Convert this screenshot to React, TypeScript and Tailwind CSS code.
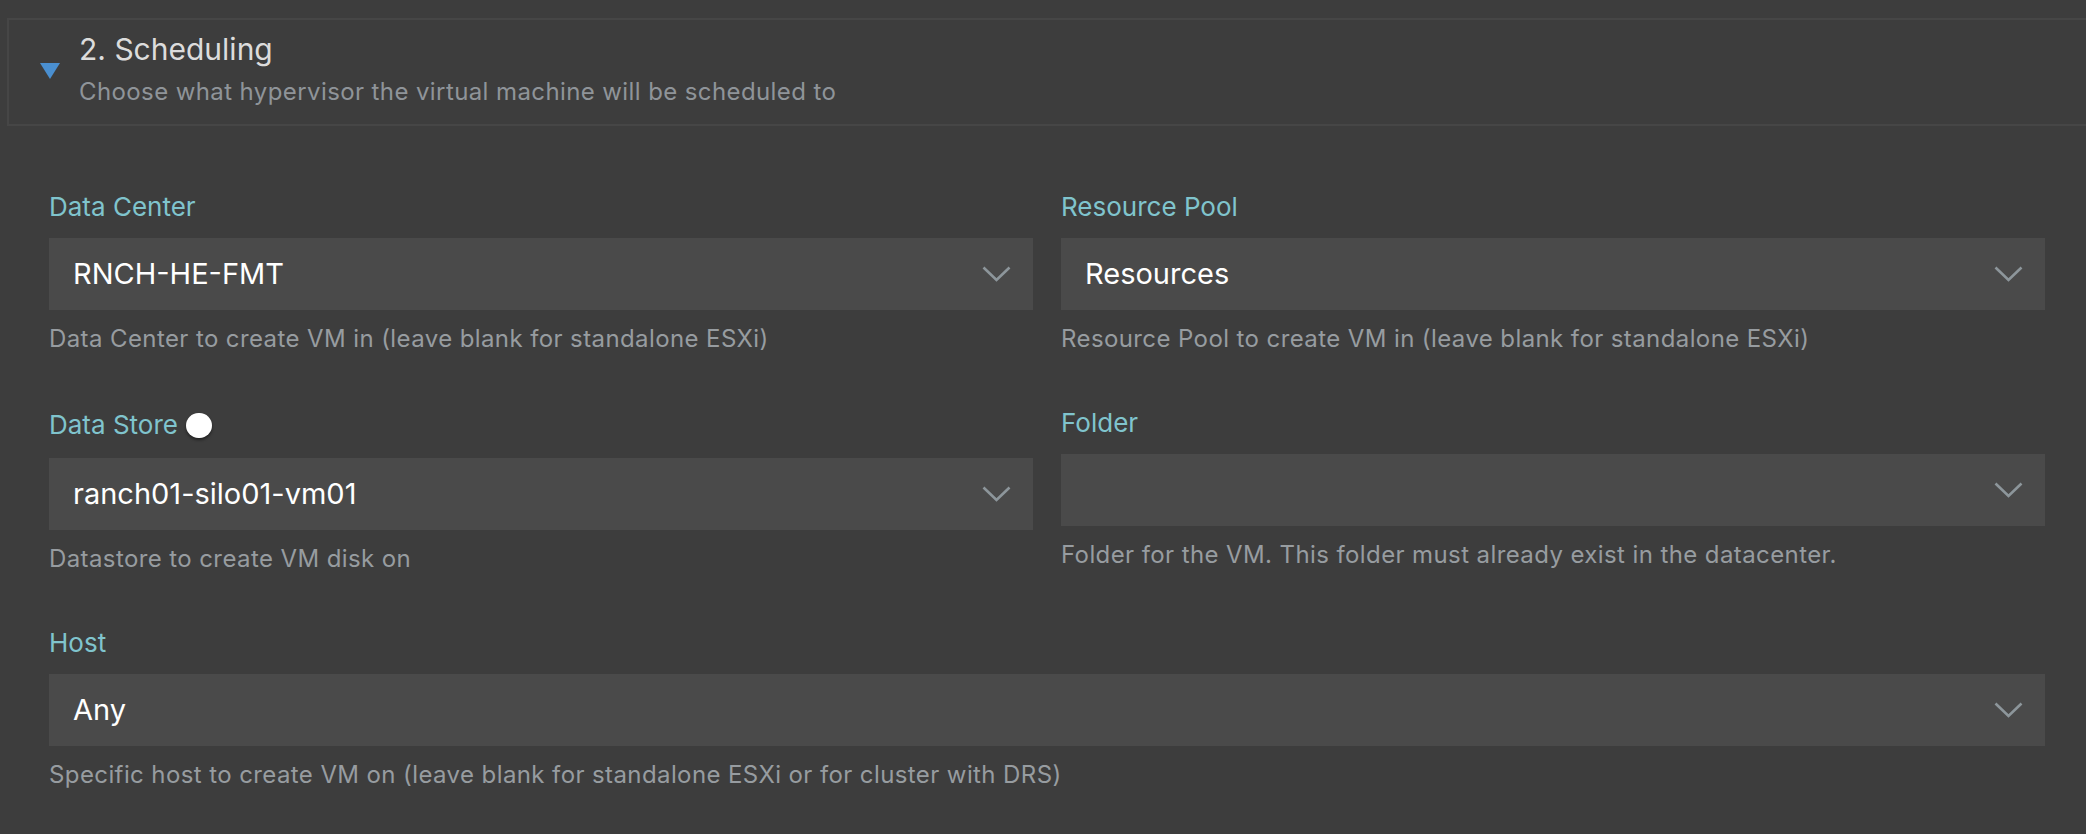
import React from 'react';

function Chevron() {
  return (
    <svg width="29" height="16" viewBox="0 0 29 16" fill="none" className="shrink-0">
      <polyline points="1.5,1.5 14.5,14 27.5,1.5" stroke="#8d969b" strokeWidth="2.6" />
    </svg>
  );
}

function Field({
  label,
  value,
  help,
  dot,
}: {
  label: string;
  value?: string;
  help: string;
  dot?: boolean;
}) {
  return (
    <div className="flex flex-col">
      <div className={`flex items-center gap-[8px] ${dot ? 'h-[34px]' : 'h-[30px]'}`}>
        <span className="text-[26px] leading-[30px] text-[#80c4cd]">{label}</span>
        {dot && <span className="w-[26px] h-[25px] rounded-full bg-white shadow-[0_2px_3px_rgba(0,0,0,0.45)]" />}
      </div>
      <div className="mt-[16px] h-[72px] bg-[#4a4a4a] flex items-center justify-between pl-[24px] pr-[22px]">
        <span className="text-[29px] text-white">{value}</span>
        <Chevron />
      </div>
      <p className="mt-[14px] text-[24px] leading-[30px] tracking-[0.4px] text-[#979ca0]">{help}</p>
    </div>
  );
}

export default function App() {
  return (
    <div className="min-h-screen bg-[#3d3d3d] pt-[18px] font-['Inter','Liberation_Sans',sans-serif]">
      {/* section header */}
      <div className="ml-[7px] h-[108px] border-2 border-r-0 border-[#464646] flex items-center pl-[31px]">
        <span className="w-0 h-0 border-l-[10px] border-r-[10px] border-t-[16px] border-l-transparent border-r-transparent border-t-[#4a8fd0] mb-[2px]" />
        <div className="ml-[19px] flex flex-col pb-[7px]">
          <h2 className="text-[30px] leading-[40px] text-[#dcdcdc]">2. Scheduling</h2>
          <p className="mt-[7px] text-[24px] leading-[32px] tracking-[0.4px] text-[#8f9499]">
            Choose what hypervisor the virtual machine will be scheduled to
          </p>
        </div>
      </div>

      {/* fields */}
      <div className="pl-[49px] pr-[41px] pt-[66px] grid grid-cols-2 gap-x-[28px] gap-y-[54px] items-start">
        <Field
          label="Data Center"
          value="RNCH-HE-FMT"
          help="Data Center to create VM in (leave blank for standalone ESXi)"
        />
        <Field
          label="Resource Pool"
          value="Resources"
          help="Resource Pool to create VM in (leave blank for standalone ESXi)"
        />
        <Field label="Data Store" value="ranch01-silo01-vm01" help="Datastore to create VM disk on" dot />
        <Field label="Folder" help="Folder for the VM. This folder must already exist in the datacenter." />
        <div className="col-span-2">
          <Field
            label="Host"
            value="Any"
            help="Specific host to create VM on (leave blank for standalone ESXi or for cluster with DRS)"
          />
        </div>
      </div>
    </div>
  );
}
